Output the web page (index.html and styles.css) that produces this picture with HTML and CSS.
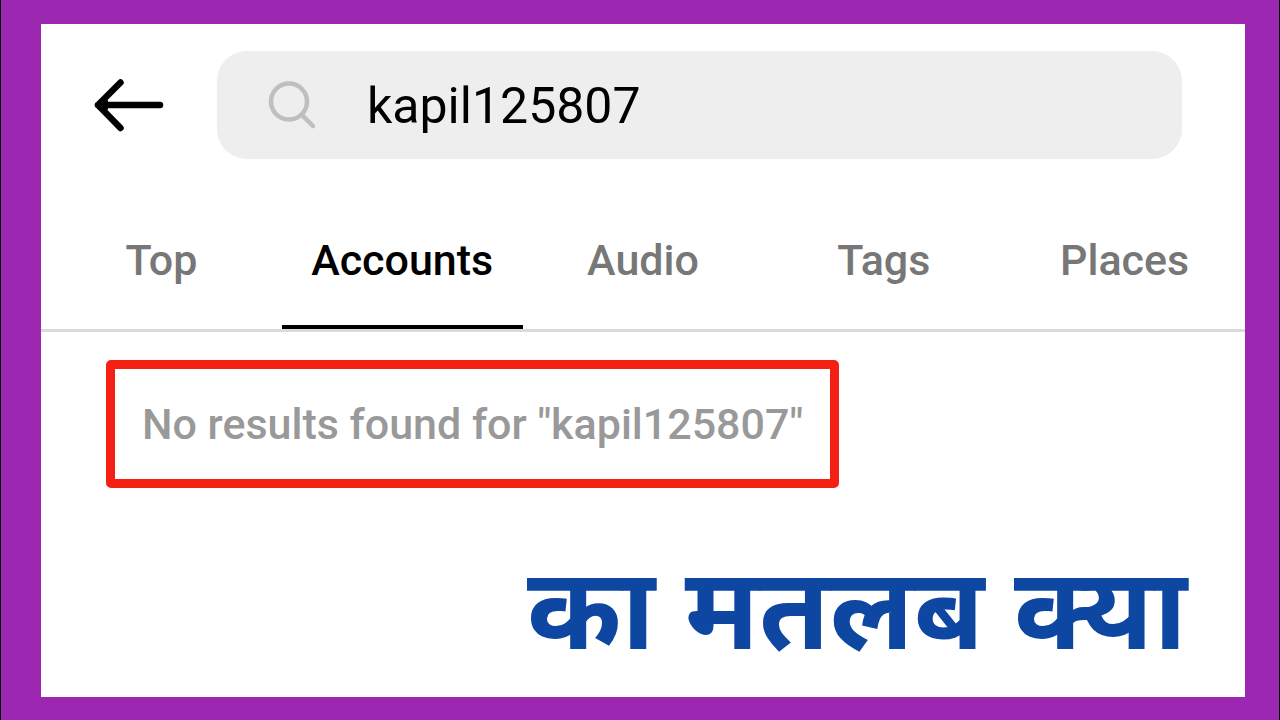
FILE: index.html
```html
<!DOCTYPE html>
<html lang="en">
<head>
    <meta charset="UTF-8">
    <meta name="viewport" content="width=device-width, initial-scale=1.0">
    <title>Search</title>
    <link rel="stylesheet" href="styles.css">
</head>
<body>
    <main class="screen">
        <form class="search-bar">
            <button type="button" class="back" aria-label="Back">
                <svg width="72" height="56" viewBox="0 0 72 56" fill="none" stroke="#000" stroke-width="6.5" stroke-linecap="round" stroke-linejoin="round">
                    <path d="M67 28H5M27.5 5.5L5 28L27.5 51"/>
                    <path d="M5 28L15 23V33Z" fill="#000" stroke="none"/>
                </svg>
            </button>
            <label class="search-field">
                <svg width="52" height="52" viewBox="0 0 52 52" fill="none" stroke="#bfbfbf" stroke-width="4.5" stroke-linecap="round">
                    <circle cx="22" cy="21.5" r="18"/>
                    <path d="M35 35L46 46"/>
                </svg>
                <input type="text" value="kapil125807" aria-label="Search">
            </label>
        </form>
        <nav class="tabs">
            <a href="#">Top</a>
            <a href="#" class="active">Accounts</a>
            <a href="#">Audio</a>
            <a href="#">Tags</a>
            <a href="#">Places</a>
        </nav>
        <p class="no-results">No results found for "kapil125807"</p>
        <h1 class="caption" lang="hi">का मतलब क्या</h1>
    </main>
</body>
</html>
```
FILE: styles.css
```css
* {
    box-sizing: border-box;
}
body {
    margin: 0;
    padding: 24px 34px 23px 40px;
    min-height: 100vh;
    display: flex;
    border: solid #000;
    border-width: 0 1px;
    background-color: #9c27b0;
    font-family: Roboto, sans-serif;
}
.screen {
    flex: 1;
    display: flex;
    flex-direction: column;
    background-color: #fff;
}
.search-bar {
    display: flex;
    align-items: center;
    gap: 52px;
    padding: 27px 63px 0 52px;
}
.back {
    display: flex;
    padding: 0;
    border: 0;
    background: none;
    cursor: pointer;
}
.search-field {
    flex: 1;
    display: flex;
    align-items: center;
    gap: 48px;
    height: 108px;
    padding: 2px 50px 0;
    border-radius: 30px;
    background-color: #eee;
}
.search-field input {
    flex: 1;
    min-width: 0;
    padding: 0;
    border: 0;
    outline: 0;
    background: none;
    color: #000;
    font: 50px Roboto, sans-serif;
}
.tabs {
    display: grid;
    grid-template-columns: repeat(5, 1fr);
    margin-top: 32px;
    border-bottom: 3px solid #dbdbdb;
}
.tabs a {
    height: 138px;
    padding-top: 44px;
    color: #777;
    font-size: 43px;
    font-weight: 500;
    line-height: 50px;
    text-align: center;
    text-decoration: none;
}
.tabs .active {
    border-bottom: 4px solid #000;
    color: #000;
}
.no-results {
    align-self: flex-start;
    margin: 28px 65px 0;
    padding: 30px 27px;
    border: 9px solid #f32013;
    border-radius: 5px;
    color: #999;
    font-size: 43px;
    font-weight: 500;
    line-height: 50px;
}
.caption {
    margin: 52px 58px 0;
    color: #0d47a1;
    font-family: "Noto Sans", sans-serif;
    font-size: 114px;
    line-height: 130px;
    text-align: right;
}
```
